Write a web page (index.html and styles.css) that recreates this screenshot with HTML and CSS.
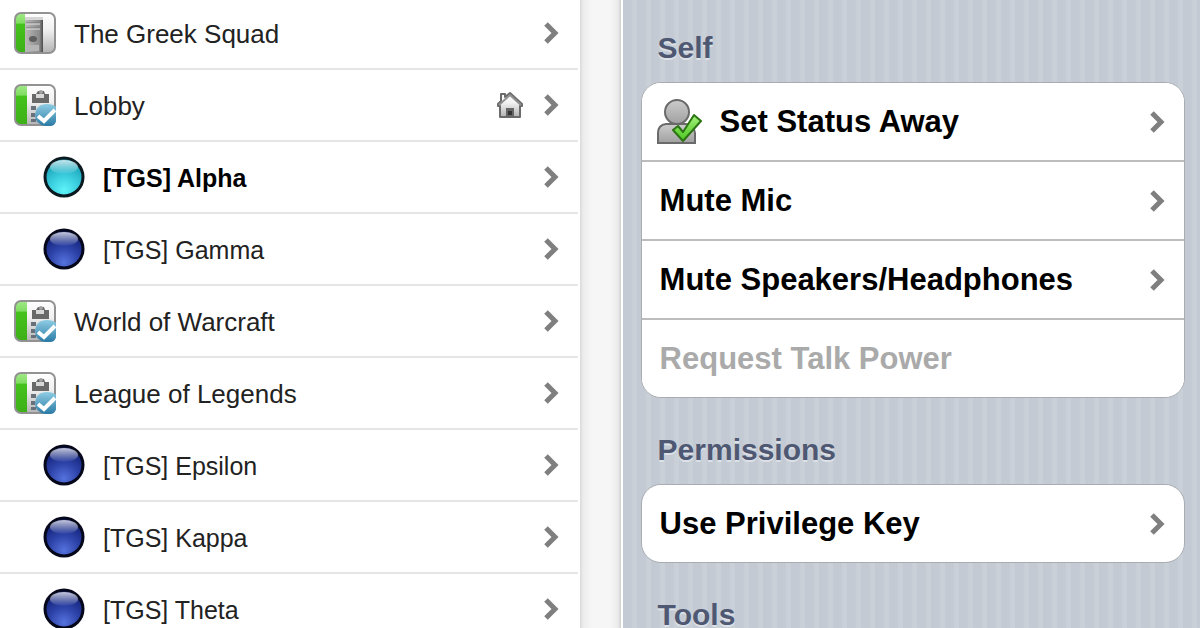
FILE: index.html
```html
<!DOCTYPE html>
<html lang="en">
<head>
    <meta charset="UTF-8">
    <meta name="viewport" content="width=device-width, initial-scale=1.0">
    <title>The Greek Squad</title>
    <link rel="stylesheet" href="styles.css">
</head>
<body>
    <!-- Shared icons -->
    <svg class="sprite" aria-hidden="true">
        <defs>
            <linearGradient id="greyFade" x1="0" y1="0" x2="0" y2="1">
                <stop offset="0" stop-color="#ffffff"/>
                <stop offset="0.4" stop-color="#f2f2f2"/>
                <stop offset="1" stop-color="#b0b0b0"/>
            </linearGradient>
            <linearGradient id="tower" x1="0" y1="0" x2="1" y2="0">
                <stop offset="0" stop-color="#b9b9b9"/>
                <stop offset="0.8" stop-color="#8a8a8a"/>
                <stop offset="1" stop-color="#4c4c4c"/>
            </linearGradient>
            <linearGradient id="greenBar" x1="0" y1="0" x2="0" y2="1">
                <stop offset="0" stop-color="#a5ea8d"/>
                <stop offset="0.27" stop-color="#7fdc60"/>
                <stop offset="0.28" stop-color="#45c31c"/>
                <stop offset="1" stop-color="#3cae17"/>
            </linearGradient>
            <linearGradient id="badge" x1="0" y1="0" x2="0" y2="1">
                <stop offset="0" stop-color="#8fcde4"/>
                <stop offset="1" stop-color="#2b7ba6"/>
            </linearGradient>
            <linearGradient id="person" x1="0" y1="0" x2="0" y2="1">
                <stop offset="0" stop-color="#cccccc"/>
                <stop offset="1" stop-color="#a0a0a0"/>
            </linearGradient>
            <linearGradient id="tick" x1="0" y1="0" x2="0" y2="1">
                <stop offset="0" stop-color="#a4f07c"/>
                <stop offset="1" stop-color="#4cc71f"/>
            </linearGradient>
            <linearGradient id="gloss" x1="0" y1="0" x2="0" y2="1">
                <stop offset="0" stop-color="#ffffff" stop-opacity="0.75"/>
                <stop offset="1" stop-color="#ffffff" stop-opacity="0.02"/>
            </linearGradient>
            <radialGradient id="cyanOrb" cx="0.5" cy="0.85" r="0.8">
                <stop offset="0" stop-color="#5ff3fb"/>
                <stop offset="0.5" stop-color="#38cbdc"/>
                <stop offset="1" stop-color="#159bb2"/>
            </radialGradient>
            <radialGradient id="blueOrb" cx="0.5" cy="0.85" r="0.8">
                <stop offset="0" stop-color="#5573dc"/>
                <stop offset="0.5" stop-color="#2c42a8"/>
                <stop offset="1" stop-color="#101e70"/>
            </radialGradient>
            <clipPath id="tile"><rect x="1" y="1" width="40" height="40" rx="6"/></clipPath>
        </defs>

        <symbol id="server" viewBox="0 0 42 42">
            <g clip-path="url(#tile)">
                <rect width="42" height="42" fill="url(#greyFade)"/>
                <rect width="11" height="42" fill="url(#greenBar)"/>
                <rect x="11" y="5" width="18" height="36" fill="url(#tower)"/>
                <path d="M11 5h18v3H11z" fill="#d5d5d5"/>
                <path d="M12 11h14M12 16h14" stroke="#777777" stroke-width="1"/>
                <path d="M12 12h14M12 17h14" stroke="#e4e4e4" stroke-width="1"/>
                <ellipse cx="19" cy="27" rx="4" ry="3" fill="#5f5f5f"/>
                <path d="M12 33h13v6H12z" fill="#b5b5b5"/>
            </g>
            <rect x="1" y="1" width="40" height="40" rx="6" fill="none" stroke="#929292" stroke-width="2"/>
        </symbol>

        <symbol id="channel" viewBox="0 0 42 42">
            <g clip-path="url(#tile)">
                <rect width="42" height="42" fill="url(#greyFade)"/>
                <rect width="13" height="42" fill="url(#greenBar)"/>
                <path d="M18 10h4l2-3h6l1 3h4v9H18z" fill="#696969"/>
                <path d="M22 10h8v4h-8z" fill="#d8d8d8"/>
                <circle cx="27" cy="8" r="2" fill="#a0a0a0"/>
                <path d="M17 22h5v4h-5zM17 29h4v4h-4zM17 35h5v3h-5z" fill="#68707c"/>
            </g>
            <rect x="1" y="1" width="40" height="40" rx="6" fill="none" stroke="#929292" stroke-width="2"/>
            <path d="M42 23v14q-1 5-6 5h-5q-10-2-10-11 1-11 12-11 6 0 9 3z" fill="url(#badge)"/>
            <path d="M24 32l6 5 11-11" fill="none" stroke="#ffffff" stroke-width="4"/>
        </symbol>

        <symbol id="orb-cyan" viewBox="0 0 42 42">
            <circle cx="21" cy="21" r="19" fill="url(#cyanOrb)" stroke="#0a1a20" stroke-width="3"/>
            <ellipse cx="21" cy="11" rx="14" ry="7" fill="url(#gloss)"/>
        </symbol>

        <symbol id="orb-blue" viewBox="0 0 42 42">
            <circle cx="21" cy="21" r="19" fill="url(#blueOrb)" stroke="#05071a" stroke-width="3"/>
            <ellipse cx="21" cy="11" rx="14" ry="7" fill="url(#gloss)"/>
        </symbol>

        <symbol id="home" viewBox="0 0 28 28">
            <path d="M4 26V15H2v-2l3-3V3h4v3l5-4 12 11v2h-2v11z" fill="url(#greyFade)" stroke="#6a6a6a" stroke-width="2" stroke-linejoin="round"/>
            <path d="M3 14L14 4l11 10" fill="none" stroke="#8f8f8f" stroke-width="2"/>
            <path d="M10 17h8v9h-8z" fill="#666666"/>
            <path d="M12 20h4v4h-4z" fill="#333333"/>
        </symbol>

        <symbol id="away" viewBox="0 0 46 46">
            <path d="M2 44V34q0-8 8-9h20q8 1 9 9v10z" fill="url(#person)" stroke="#6a6a6a" stroke-width="2"/>
            <circle cx="21" cy="13" r="12" fill="url(#person)" stroke="#6a6a6a" stroke-width="2"/>
            <path d="M17 31l5-4 5 6L38 16l7 6-18 20z" fill="url(#tick)" stroke="#2b7413" stroke-width="2" stroke-linejoin="round"/>
        </symbol>

        <symbol id="chevron" viewBox="0 0 16 24">
            <path d="M2 3l9 9-9 9" fill="none" stroke="#7f7f7f" stroke-width="5"/>
        </symbol>
    </svg>

    <!-- Channel tree -->
    <nav class="channels">
        <ul class="channel-list">
            <li><a class="channel" href="#">
                <svg class="icon"><use href="#server"/></svg>
                <span class="name">The Greek Squad</span>
                <svg class="chevron"><use href="#chevron"/></svg>
            </a></li>
            <li><a class="channel" href="#">
                <svg class="icon"><use href="#channel"/></svg>
                <span class="name">Lobby</span>
                <svg class="home"><use href="#home"/></svg>
                <svg class="chevron"><use href="#chevron"/></svg>
            </a></li>
            <li><a class="channel client current" href="#">
                <svg class="icon"><use href="#orb-cyan"/></svg>
                <span class="name">[TGS] Alpha</span>
                <svg class="chevron"><use href="#chevron"/></svg>
            </a></li>
            <li><a class="channel client" href="#">
                <svg class="icon"><use href="#orb-blue"/></svg>
                <span class="name">[TGS] Gamma</span>
                <svg class="chevron"><use href="#chevron"/></svg>
            </a></li>
            <li><a class="channel" href="#">
                <svg class="icon"><use href="#channel"/></svg>
                <span class="name">World of Warcraft</span>
                <svg class="chevron"><use href="#chevron"/></svg>
            </a></li>
            <li><a class="channel" href="#">
                <svg class="icon"><use href="#channel"/></svg>
                <span class="name">League of Legends</span>
                <svg class="chevron"><use href="#chevron"/></svg>
            </a></li>
            <li><a class="channel client" href="#">
                <svg class="icon"><use href="#orb-blue"/></svg>
                <span class="name">[TGS] Epsilon</span>
                <svg class="chevron"><use href="#chevron"/></svg>
            </a></li>
            <li><a class="channel client" href="#">
                <svg class="icon"><use href="#orb-blue"/></svg>
                <span class="name">[TGS] Kappa</span>
                <svg class="chevron"><use href="#chevron"/></svg>
            </a></li>
            <li><a class="channel client" href="#">
                <svg class="icon"><use href="#orb-blue"/></svg>
                <span class="name">[TGS] Theta</span>
                <svg class="chevron"><use href="#chevron"/></svg>
            </a></li>
        </ul>
    </nav>

    <div class="gutter"></div>

    <!-- Options -->
    <main class="options">
        <h2>Self</h2>
        <div class="card">
            <button class="option" type="button">
                <svg class="away"><use href="#away"/></svg>
                <span class="name">Set Status Away</span>
                <svg class="chevron"><use href="#chevron"/></svg>
            </button>
            <button class="option" type="button">
                <span class="name">Mute Mic</span>
                <svg class="chevron"><use href="#chevron"/></svg>
            </button>
            <button class="option" type="button">
                <span class="name">Mute Speakers/Headphones</span>
                <svg class="chevron"><use href="#chevron"/></svg>
            </button>
            <button class="option" type="button" disabled>
                <span class="name">Request Talk Power</span>
            </button>
        </div>

        <h2>Permissions</h2>
        <div class="card">
            <button class="option" type="button">
                <span class="name">Use Privilege Key</span>
                <svg class="chevron"><use href="#chevron"/></svg>
            </button>
        </div>

        <h2>Tools</h2>
    </main>
</body>
</html>
```
FILE: styles.css
```css
* { box-sizing: border-box; }
body {
    font-family: "Liberation Sans", Arial, Helvetica, sans-serif;
    display: flex;
    height: 100vh;
    margin: 0;
    overflow: hidden;
    background: #ffffff;
}
.sprite {
    position: absolute;
    width: 0;
    height: 0;
}
.name {
    flex: 1;
    text-align: left;
    white-space: nowrap;
}
.chevron {
    width: 16px;
    height: 24px;
    flex: none;
}

/* Channel tree */
.channels {
    flex: 0 0 48.3%;
    overflow: hidden;
    padding-right: 2px;
}
.channel-list {
    list-style: none;
    margin: -2px 0 0; /* scrolled slightly */
    padding: 0;
}
.channel {
    display: flex;
    align-items: center;
    height: 72px;
    padding: 0 18px 0 14px;
    border-bottom: 2px solid #e6e6e6;
    color: #222222;
    font-size: 26px;
    text-decoration: none;
}
.channel .name { padding-top: 2px; }
.channel .icon {
    width: 42px;
    height: 42px;
    margin-right: 18px;
}
.channel.client {
    padding-left: 43px;
    font-size: 25px;
}
.channel.current {
    color: #000000;
    font-weight: bold;
}
.home {
    width: 28px;
    height: 28px;
    margin-right: 20px;
}

/* Split between the two panes */
.gutter {
    flex: 0 0 43px;
    background: linear-gradient(to right, #d9d9d9, #ececec 3px, #f6f6f6 12px, #f6f6f6 30px, #ebebeb 38px, #cfcfcf 41px, #ffffff 41px);
}

/* Options */
.options {
    flex: 1;
    overflow: hidden;
    padding: 26px 15px 0 18px;
    background: repeating-linear-gradient(to right, #c4cad4 0, #c4cad4 8px, #c9d0d7 10px, #c9d0d7 14px);
}
h2 {
    margin: 0 0 12px;
    padding-left: 17px;
    color: #4f5872;
    font-size: 30px;
    line-height: 44px;
    text-shadow: 0 2px 0 #dce1e7;
}
.card {
    margin-bottom: 30px;
    border: 1px solid #a9adb1;
    border-radius: 20px;
    background: #ffffff;
    overflow: hidden;
}
.option {
    display: flex;
    align-items: center;
    width: 100%;
    height: 77px;
    padding: 0 18px;
    border: none;
    background: #ffffff;
    color: #000000;
    font-family: inherit;
    font-size: 31px;
    font-weight: bold;
    cursor: pointer;
}
.option + .option {
    height: 79px;
    border-top: 2px solid #bdbdbd;
}
.option:disabled {
    color: #aaaaaa;
    cursor: default;
}
.away {
    width: 46px;
    height: 46px;
    margin: 0 18px 0 -4px;
}
```
